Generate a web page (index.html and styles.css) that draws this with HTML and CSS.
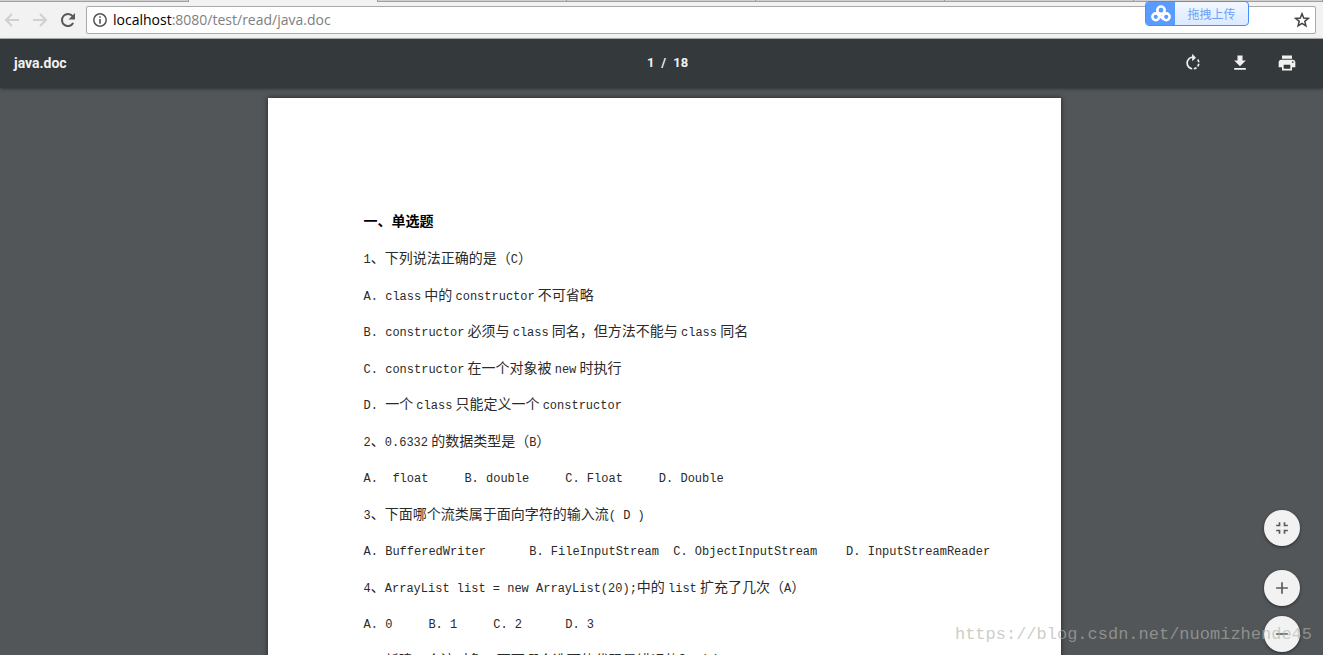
FILE: index.html
```
<!DOCTYPE html>
<html lang="zh-CN">
<head>
    <meta charset="UTF-8">
    <meta name="viewport" content="width=device-width, initial-scale=1.0">
    <title>java.doc</title>
    <link rel="stylesheet" href="styles.css">
</head>
<body>
    <!-- Browser bar -->
    <div class="tab-strip">
        <span></span>
        <span class="tab-active"></span>
        <span></span>
        <span></span>
        <span></span>
        <span></span>
        <span></span>
    </div>
    <header class="browser-bar">
        <button class="nav-btn" aria-label="Back" disabled>
            <svg width="16" height="16" viewBox="0 0 16 16"><path d="M15 8H2M8 2L2 8l6 6" fill="none" stroke="currentColor" stroke-width="2"/></svg>
        </button>
        <button class="nav-btn" aria-label="Forward" disabled>
            <svg width="16" height="16" viewBox="0 0 16 16"><path d="M1 8h13M8 2l6 6-6 6" fill="none" stroke="currentColor" stroke-width="2"/></svg>
        </button>
        <button class="nav-btn reload" aria-label="Reload">
            <svg width="16" height="16" viewBox="0 0 16 16"><path d="M13.2 11A6 6 0 1 1 12.6 4.200" fill="none" stroke="currentColor" stroke-width="2"/><path d="M15 1v6.500H8.500z" fill="currentColor"/></svg>
        </button>
        <div class="address">
            <svg class="info" width="14" height="14" viewBox="0 0 14 14"><circle cx="7" cy="7" r="6.200" fill="none" stroke="currentColor" stroke-width="1.500"/><path d="M6.200 3.200h1.600v1.600H6.200zM6.200 6h1.600v4.800H6.200z" fill="currentColor"/></svg>
            <a class="url" href="#"><span class="host">localhost</span>:8080/test/read/java.doc</a>
            <button class="star" aria-label="Bookmark">
                <svg width="16" height="16" viewBox="0 0 16 16"><path d="M8 1.800l1.700 4.300 4.600.3-3.500 2.900 1.100 4.500L8 11.300l-3.900 2.500 1.100-4.500-3.500-2.900 4.600-.3z" fill="none" stroke="currentColor" stroke-width="1.500"/></svg>
            </button>
        </div>
        <button class="upload">
            <span class="upload-logo">
                <svg width="20" height="18" viewBox="0 0 20 18"><g fill="none" stroke="#fff" stroke-width="2.600"><circle cx="10" cy="5.200" r="3.700"/><circle cx="4.800" cy="11.800" r="3.400"/><circle cx="15.200" cy="11.800" r="3.400"/><path d="M7.200 9.400l5.600 4.800"/></g></svg>
            </span>
            <span class="upload-text">拖拽上传</span>
        </button>
    </header>

    <!-- PDF viewer -->
    <nav class="toolbar">
        <span class="doc-title">java.doc</span>
        <span class="pages"><span>1</span><span>/</span><span>18</span></span>
        <div class="tools">
            <button aria-label="Rotate">
                <svg width="20" height="20" viewBox="0 0 24 24"><path fill="currentColor" d="M15.550 5.550L11 1v3.070C7.060 4.560 4 7.920 4 12s3.050 7.440 7 7.930v-2.020c-2.840-.48-5-2.940-5-5.910s2.160-5.430 5-5.910V10l4.550-4.450zM19.930 11c-.17-1.390-.72-2.730-1.620-3.890l-1.420 1.420c.54.750.880 1.600 1.020 2.470h2.020zM13 17.900v2.020c1.390-.17 2.740-.71 3.900-1.610l-1.440-1.440c-.75.540-1.590.890-2.460 1.030zm3.890-2.420l1.420 1.410c.9-1.160 1.450-2.500 1.620-3.890h-2.020c-.14.870-.48 1.720-1.020 2.480z"/></svg>
            </button>
            <button aria-label="Download">
                <svg width="20" height="20" viewBox="0 0 24 24"><path fill="currentColor" d="M19 9h-4V3H9v6H5l7 7 7-7zM5 18v2h14v-2H5z"/></svg>
            </button>
            <button aria-label="Print">
                <svg width="20" height="20" viewBox="0 0 24 24"><path fill="currentColor" d="M19 8H5c-1.660 0-3 1.340-3 3v6h4v4h12v-4h4v-6c0-1.660-1.340-3-3-3zm-3 11H8v-5h8v5zm3-7c-.55 0-1-.45-1-1s.45-1 1-1 1 .45 1 1-.45 1-1 1zm-1-9H6v4h12V3z"/></svg>
            </button>
        </div>
    </nav>

    <main class="viewer">
        <article class="page">
            <h1>一、单选题</h1>
            <p><code>1</code>、下列说法正确的是（<code>C</code>）</p>
            <p><code>A. class</code> 中的 <code>constructor</code> 不可省略</p>
            <p><code>B. constructor</code> 必须与 <code>class</code> 同名，但方法不能与 <code>class</code> 同名</p>
            <p><code>C. constructor</code> 在一个对象被 <code>new</code> 时执行</p>
            <p><code>D. </code>一个 <code>class</code> 只能定义一个 <code>constructor</code></p>
            <p><code>2</code>、<code>0.6332</code> 的数据类型是（<code>B</code>）</p>
            <p><code>A.  float     B. double     C. Float     D. Double</code></p>
            <p><code>3</code>、下面哪个流类属于面向字符的输入流<code>( D )</code></p>
            <p><code>A. BufferedWriter      B. FileInputStream  C. ObjectInputStream    D. InputStreamReader</code></p>
            <p><code>4</code>、<code>ArrayList list = new ArrayList(20);</code>中的 <code>list</code> 扩充了几次（<code>A</code>）</p>
            <p><code>A. 0     B. 1     C. 2      D. 3</code></p>
            <p><code>5</code>、新建一个流对象，下面哪个选项的代码是错误的？（<code>B</code>）</p>
        </article>
    </main>

    <div class="zoom-buttons">
        <button class="fit" aria-label="Fit to page">
            <svg width="20" height="20" viewBox="0 0 24 24"><path fill="currentColor" d="M5 16h3v3h2v-5H5v2zm3-8H5v2h5V5H8v3zm6 11h2v-3h3v-2h-5v5zm2-11V5h-2v5h5V8h-3z"/></svg>
        </button>
        <button aria-label="Zoom in">
            <svg width="20" height="20" viewBox="0 0 24 24"><path fill="currentColor" d="M19 13h-6v6h-2v-6H5v-2h6V5h2v6h6v2z"/></svg>
        </button>
        <button aria-label="Zoom out">
            <svg width="20" height="20" viewBox="0 0 24 24"><path fill="currentColor" d="M19 13H5v-2h14v2z"/></svg>
        </button>
    </div>
    <div class="watermark">https://blog.csdn.net/nuomizhende45</div>
</body>
</html>
```

FILE: styles.css
```
* {
    box-sizing: border-box;
}

body {
    margin: 0;
    height: 100vh;
    display: flex;
    flex-direction: column;
    overflow: hidden;
    position: relative;
    background: #525659;
    font-family: Roboto, "Noto Sans CJK SC", sans-serif;
}

button {
    display: flex;
    align-items: center;
    justify-content: center;
    padding: 0;
    border: none;
    background: none;
    cursor: pointer;
}

/* Browser bar */
.tab-strip {
    display: flex;
    height: 2px;
    flex: none;
    background: #f2f2f2;
}

.tab-strip span {
    flex: 1;
    background: #d0d0d0;
    border-right: 1px solid #999;
    border-bottom: 1px solid #a0a0a0;
}

.tab-strip .tab-active {
    background: #f2f2f2;
    border-bottom: none;
}

.browser-bar {
    display: flex;
    align-items: center;
    flex: none;
    height: 37px;
    padding: 0 7px 0 4px;
    gap: 12px;
    position: relative;
    background: #f2f2f2;
    border-bottom: 1px solid #b5b5b5;
}

.nav-btn {
    width: 16px;
    height: 16px;
    color: #d0d0d0;
}

.reload {
    color: #5a5a5a;
}

.address {
    flex: 1;
    display: flex;
    align-items: center;
    height: 28px;
    margin-left: -2px;
    padding: 0 5px 0 6px;
    gap: 6px;
    background: #fff;
    border: 1px solid #a9a9a9;
    border-radius: 2px;
}

.info {
    color: #555;
}

.url {
    flex: 1;
    color: #808080;
    font-family: "Open Sans", sans-serif;
    font-size: 14px;
    line-height: 18px;
    text-decoration: none;
}

.host {
    color: #000;
}

.star {
    color: #444;
}

.upload {
    position: absolute;
    top: -1px;
    right: 74px;
    width: 104px;
    height: 25px;
    align-items: stretch;
    background: linear-gradient(#f3f8ff, #dce9ff);
    border: 1px solid #4a8ff5;
    border-radius: 4px;
    overflow: hidden;
}

.upload-logo {
    display: flex;
    align-items: center;
    justify-content: center;
    width: 29px;
    background: #5a9bff;
}

.upload-text {
    flex: 1;
    color: #6d9ff5;
    font-family: "Noto Sans CJK SC", sans-serif;
    font-size: 12px;
    line-height: 23px;
}

/* PDF toolbar */
.toolbar {
    display: grid;
    grid-template-columns: 1fr auto 1fr;
    align-items: center;
    flex: none;
    height: 49px;
    padding: 0 26px 2px 14px;
    position: relative;
    background: #34393b;
    color: #f1f1f1;
    font-size: 13px;
    font-weight: bold;
    box-shadow: 0 1px 3px rgba(0, 0, 0, 0.4);
}

.doc-title {
    font-size: 14px;
}

.pages {
    display: flex;
    gap: 7px;
    margin-left: 24px;
}

.tools {
    display: flex;
    justify-content: flex-end;
    gap: 27px;
}

.tools button {
    width: 20px;
    height: 20px;
    color: #f1f1f1;
}

/* Document */
.viewer {
    flex: 1;
    min-height: 0;
    padding: 10px 0 0 6px;
    overflow: hidden;
}

.page {
    width: 60vw;
    min-width: 720px;
    margin: 0 auto;
    padding: 104px 0 96px 96px;
    background: #fff;
    color: #2a2a2a;
    box-shadow: 0 0 5px rgba(0, 0, 0, 0.6);
    font-family: "Noto Sans CJK SC", sans-serif;
}

.page h1,
.page p {
    height: 37px;
    margin: 0;
    font-size: 14px;
    line-height: 37px;
    white-space: pre;
}

.page p:nth-child(odd) {
    height: 36px;
}

.page h1 {
    color: #000;
}

.page code {
    font-family: "Liberation Mono", monospace;
    font-size: 12px;
}

/* Floating controls */
.zoom-buttons {
    position: absolute;
    right: 23px;
    bottom: 3px;
    display: flex;
    flex-direction: column;
    gap: 10px;
}

.zoom-buttons button {
    width: 36px;
    height: 36px;
    border-radius: 50%;
    background: #f2f2f2;
    color: #5a5a5a;
    box-shadow: 0 1px 3px rgba(0, 0, 0, 0.5);
}

.zoom-buttons .fit {
    margin-bottom: 14px;
}

.watermark {
    position: absolute;
    right: 11px;
    bottom: 10px;
    color: rgba(175, 178, 168, 0.65);
    font-family: "Liberation Mono", monospace;
    font-size: 17px;
    line-height: 20px;
}
```
